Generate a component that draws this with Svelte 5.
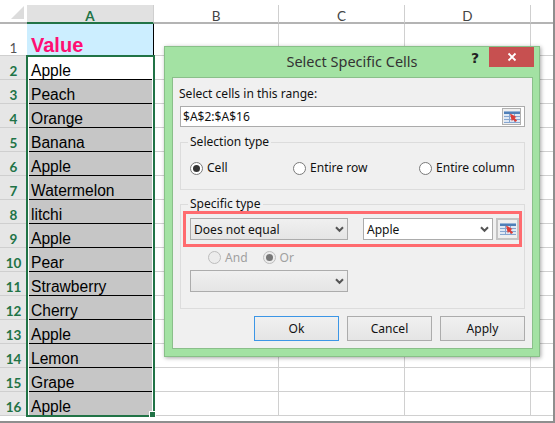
<script>
  const fruits = ['Apple','Peach','Orange','Banana','Apple','Watermelon','litchi','Apple','Pear','Strawberry','Cherry','Apple','Lemon','Grape','Apple'];
</script>

{#snippet picker()}
  <svg class="pick" width="16" height="12" viewBox="0 0 16 12">
    <rect x="0" y="0" width="16" height="12" fill="#dfe8f4"/>
    <rect x="0" y="0.5" width="16" height="2.5" fill="#4f7fb8"/>
    <path d="M0 5.5h16M0 8.5h16M0 11.5h16M5.5 3v9M10.5 3v9" stroke="#86a6d0" stroke-width="1" fill="none"/>
    <path d="M6 2.5l6.5 3.4-2 1 2.6 2.6-1.6 1.6-2.6-2.6-1 2z" fill="#dc3d36"/>
  </svg>
{/snippet}

{#snippet chevron()}
  <svg class="chev" width="9" height="7" viewBox="0 0 9 7">
    <path d="M1 1.2l3.5 3.6L8 1.2" fill="none" stroke="#555" stroke-width="2"/>
  </svg>
{/snippet}

<div class="page">
  <div class="sheet">
    <div class="corner"><svg width="13" height="13" viewBox="0 0 13 13"><path d="M13 0v13H0z" fill="#dcdcdc"/></svg></div>
    <div class="colhead active">A</div>
    <div class="colhead">B</div>
    <div class="colhead">C</div>
    <div class="colhead">D</div>
    <div class="colhead last"></div>

    <div class="rowhead first">1</div>
    <div class="cell title">Value</div>
    <div class="blank"></div><div class="blank"></div><div class="blank"></div><div class="blank last"></div>

    {#each fruits as fruit, i}
      <div class="rowhead">{i + 2}</div>
      <div class="cell" class:white={i === 0}><span class="fill">{fruit}</span></div>
      <div class="blank"></div><div class="blank"></div><div class="blank"></div><div class="blank last"></div>
    {/each}

    <div class="selection"><span class="handle"></span></div>
  </div>

  <div class="dialog">
    <header class="titlebar">
      <span class="title-text">Select Specific Cells</span>
      <span class="help">?</span>
      <span class="close">
        <svg width="10" height="10" viewBox="0 0 10 10"><path d="M1.5 1.5l7 7M8.5 1.5l-7 7" stroke="#fff" stroke-width="1.8"/></svg>
      </span>
    </header>
    <div class="panel">
      <div class="range-label">Select cells in this range:</div>
      <div class="range">
        <span>$A$2:$A$16</span>
        <span class="pick-btn small">{@render picker()}</span>
      </div>

      <fieldset class="sel-type">
        <legend>Selection type</legend>
        <div class="radios">
          <label class="r1"><input type="radio" name="t" checked /><span>Cell</span></label>
          <label class="r2"><input type="radio" name="t" /><span>Entire row</span></label>
          <label class="r3"><input type="radio" name="t" /><span>Entire column</span></label>
        </div>
      </fieldset>

      <fieldset class="spec-type">
        <legend>Specific type</legend>
        <div class="highlight">
          <div class="combo gray"><span>Does not equal</span>{@render chevron()}</div>
          <div class="combo white-combo"><span>Apple</span>{@render chevron()}</div>
          <span class="pick-btn big">{@render picker()}</span>
        </div>
        <div class="logic">
          <label class="dis"><input type="radio" name="l" disabled /><span>And</span></label>
          <label class="dis"><input type="radio" name="l" disabled checked /><span>Or</span></label>
        </div>
        <div class="combo gray third">{@render chevron()}</div>
      </fieldset>

      <div class="buttons">
        <button class="focus">Ok</button>
        <button>Cancel</button>
        <button>Apply</button>
      </div>
    </div>
  </div>
</div>

<style>
  :global(body) { margin: 0; background: #fff; }
  .page {
    position: relative;
    width: 555px;
    height: 423px;
    overflow: hidden;
    background: #fff;
    box-sizing: border-box;
    padding-top: 5px;
  }
  .page::after {
    content: '';
    position: absolute;
    left: 0; top: 0;
    width: 553px; height: 421px;
    border-right: 2px solid #8e8e8e;
    border-bottom: 2px solid #8e8e8e;
    pointer-events: none;
  }
  .sheet {
    position: relative;
    display: grid;
    grid-template-columns: 27px 127px 125px 126px 126px 22px;
    grid-template-rows: 19px 32px repeat(15, 24px);
  }
  .corner { display: flex; justify-content: flex-end; align-items: flex-end; padding: 0 3px 3px 0; border-bottom: 2px solid #b4b4b4; box-sizing: border-box; }
  .colhead {
    display: flex; align-items: center; justify-content: center;
    font: 13.5px "Lato", "Liberation Sans", sans-serif;
    color: #444;
    padding-top: 5px;
    border-right: 1px solid #cfcfcf;
    border-bottom: 2px solid #b4b4b4;
    box-sizing: border-box;
  }
  .colhead.last { border-right: 0; }
  .colhead.active {
    background: #e1e1e1;
    color: #217346;
    font-weight: 700;
    border-bottom-color: #217346;
  }
  .rowhead {
    display: flex; align-items: center; justify-content: center;
    background: #e6e6e6;
    color: #217346;
    font: 700 13.5px "Lato", "Liberation Sans", sans-serif;
    padding-top: 7px;
    box-sizing: border-box;
    border-bottom: 1px solid #cfcfcf;
  }
  .rowhead.first { background: #fff; color: #555; font-weight: 400; padding-top: 16px; }
  .blank { border-right: 1px solid #d0d0d0; border-bottom: 1px solid #d0d0d0; box-sizing: border-box; }
  .blank.last { border-right: 0; }
  .cell {
    box-sizing: border-box;
    padding: 0 2px;
    font: 15.6px/24px "Liberation Sans", Arial, sans-serif;
    color: #000;
    display: flex;
  }
  .cell.title {
    background: #cceeff;
    color: #ff0f73;
    font-weight: 700;
    font-size: 20px;
    line-height: 20px;
    padding: 11px 4px 0;
    border-right: 1px solid #000;
  }
  .fill {
    flex: 1;
    background: #c6c6c6;
    border-bottom: 1px solid #000;
    padding: 5px 0 0 2px;
    line-height: 19px;
    box-sizing: border-box;
    white-space: nowrap;
    overflow: hidden;
  }
  .white .fill { background: #fff; }
  .selection {
    position: absolute;
    left: 26px; top: 50px;
    width: 129px; height: 362px;
    box-sizing: border-box;
    border: 2px solid #217346;
    pointer-events: none;
  }
  .handle {
    position: absolute;
    right: -3px; bottom: -3px;
    width: 5px; height: 5px;
    background: #217346;
    border: 1px solid #fff;
  }

  .dialog {
    position: absolute;
    left: 164px; top: 46px;
    width: 376px; height: 311px;
    box-sizing: border-box;
    background: #a3e2a3;
    border: 1px solid #88c088;
    box-shadow: 1px 1px 4px rgba(0,0,0,.35);
    display: flex;
    flex-direction: column;
    font: 12.05px "Noto Sans", "DejaVu Sans", sans-serif;
    color: #111;
  }
  .titlebar { position: relative; height: 30px; flex: none; display: flex; justify-content: center; align-items: center; }
  .title-text { font-size: 14.5px; color: #333; padding-bottom: 3px; }
  .help { position: absolute; left: 306px; top: 0; font: 700 14px/22px "DejaVu Sans", sans-serif; color: #222; }
  .close {
    position: absolute; right: 5px; top: 0;
    width: 45px; height: 20px;
    background: #c75050;
    display: flex; align-items: center; justify-content: center;
  }
  .panel {
    flex: 1;
    margin: 0 6px 7px 7px;
    background: #f0f0f0;
    border: 1px solid #8abf8a;
    padding: 0 7px 0 7px;
    box-sizing: border-box;
    display: flex;
    flex-direction: column;
  }
  .range-label { line-height: 16px; margin-top: 8px; margin-left: -1px; }
  .range {
    height: 21px;
    margin-top: 4px;
    box-sizing: border-box;
    background: #fff;
    border: 1px solid #ababab;
    display: flex; align-items: center; justify-content: space-between;
    padding: 0 3px 0 2px;
    flex: none;
  }
  .pick-btn { display: flex; align-items: center; justify-content: center; box-sizing: border-box; background: #efefef; border: 1px solid #b0b0b0; }
  .pick-btn.small { width: 19px; height: 17px; }
  .pick-btn.big { width: 24px; height: 22px; border-width: 2px; border-color: #c4c4c4; }
  .pick { display: block; }

  fieldset { margin: 0; padding: 0; border: 1px solid #dcdcdc; min-width: 0; }
  legend { padding: 0 2px; margin-left: 7px; line-height: 16px; }
  .sel-type { margin-top: 7px; height: 56px; box-sizing: border-box; }
  .spec-type { margin-top: 6px; height: 113px; box-sizing: border-box; }
  .radios { display: flex; padding: 10px 0 0 9px; }
  .radios label { display: flex; align-items: center; gap: 4px; line-height: 16px; }
  .r1 { width: 103px; }
  .r2 { width: 126px; }
  input[type="radio"] {
    appearance: none;
    margin: 0;
    width: 13px; height: 13px;
    border: 1px solid #7a7a7a;
    border-radius: 50%;
    background: #fff;
    box-sizing: border-box;
    display: grid;
    place-items: center;
    flex: none;
  }
  input[type="radio"]:checked::before {
    content: '';
    width: 7px; height: 7px;
    border-radius: 50%;
    background: #333;
  }
  input[type="radio"]:disabled { border-color: #bdbdbd; background: #ececec; }
  input[type="radio"]:disabled:checked::before { background: #777; }

  .highlight {
    margin: -1px 2px 0 2px;
    height: 36px;
    box-sizing: border-box;
    border: 3px solid #ff6b6f;
    display: flex;
    align-items: center;
    padding-left: 4px;
  }
  .combo {
    position: relative;
    box-sizing: border-box;
    width: 158px;
    height: 22px;
    border: 1px solid #acacac;
    display: flex;
    align-items: center;
    padding-left: 3px;
    flex: none;
  }
  .gray { background: linear-gradient(#f0f0f0, #e5e5e5); }
  .white-combo { background: #fff; width: 130px; margin-left: 15px; margin-right: 3px; }
  .chev { position: absolute; right: 3px; top: 7px; }
  .third { margin: 0 0 0 9px; }
  .logic { display: flex; padding: 0 0 1px 27px; height: 22px; align-items: center; box-sizing: border-box; }
  .dis { display: flex; align-items: center; gap: 4px; color: #a0a0a0; margin-right: 15px; }
  .logic + .third { margin-top: 1px; }
  .buttons { display: flex; gap: 8px; justify-content: flex-end; margin-top: 7px; }
  button {
    width: 85px; height: 25px;
    box-sizing: border-box;
    border: 1px solid #acacac;
    background: linear-gradient(#f0f0f0, #e5e5e5);
    font: inherit;
    color: #111;
    padding: 0;
  }
  button.focus { border-color: #3c96e6; }
</style>
